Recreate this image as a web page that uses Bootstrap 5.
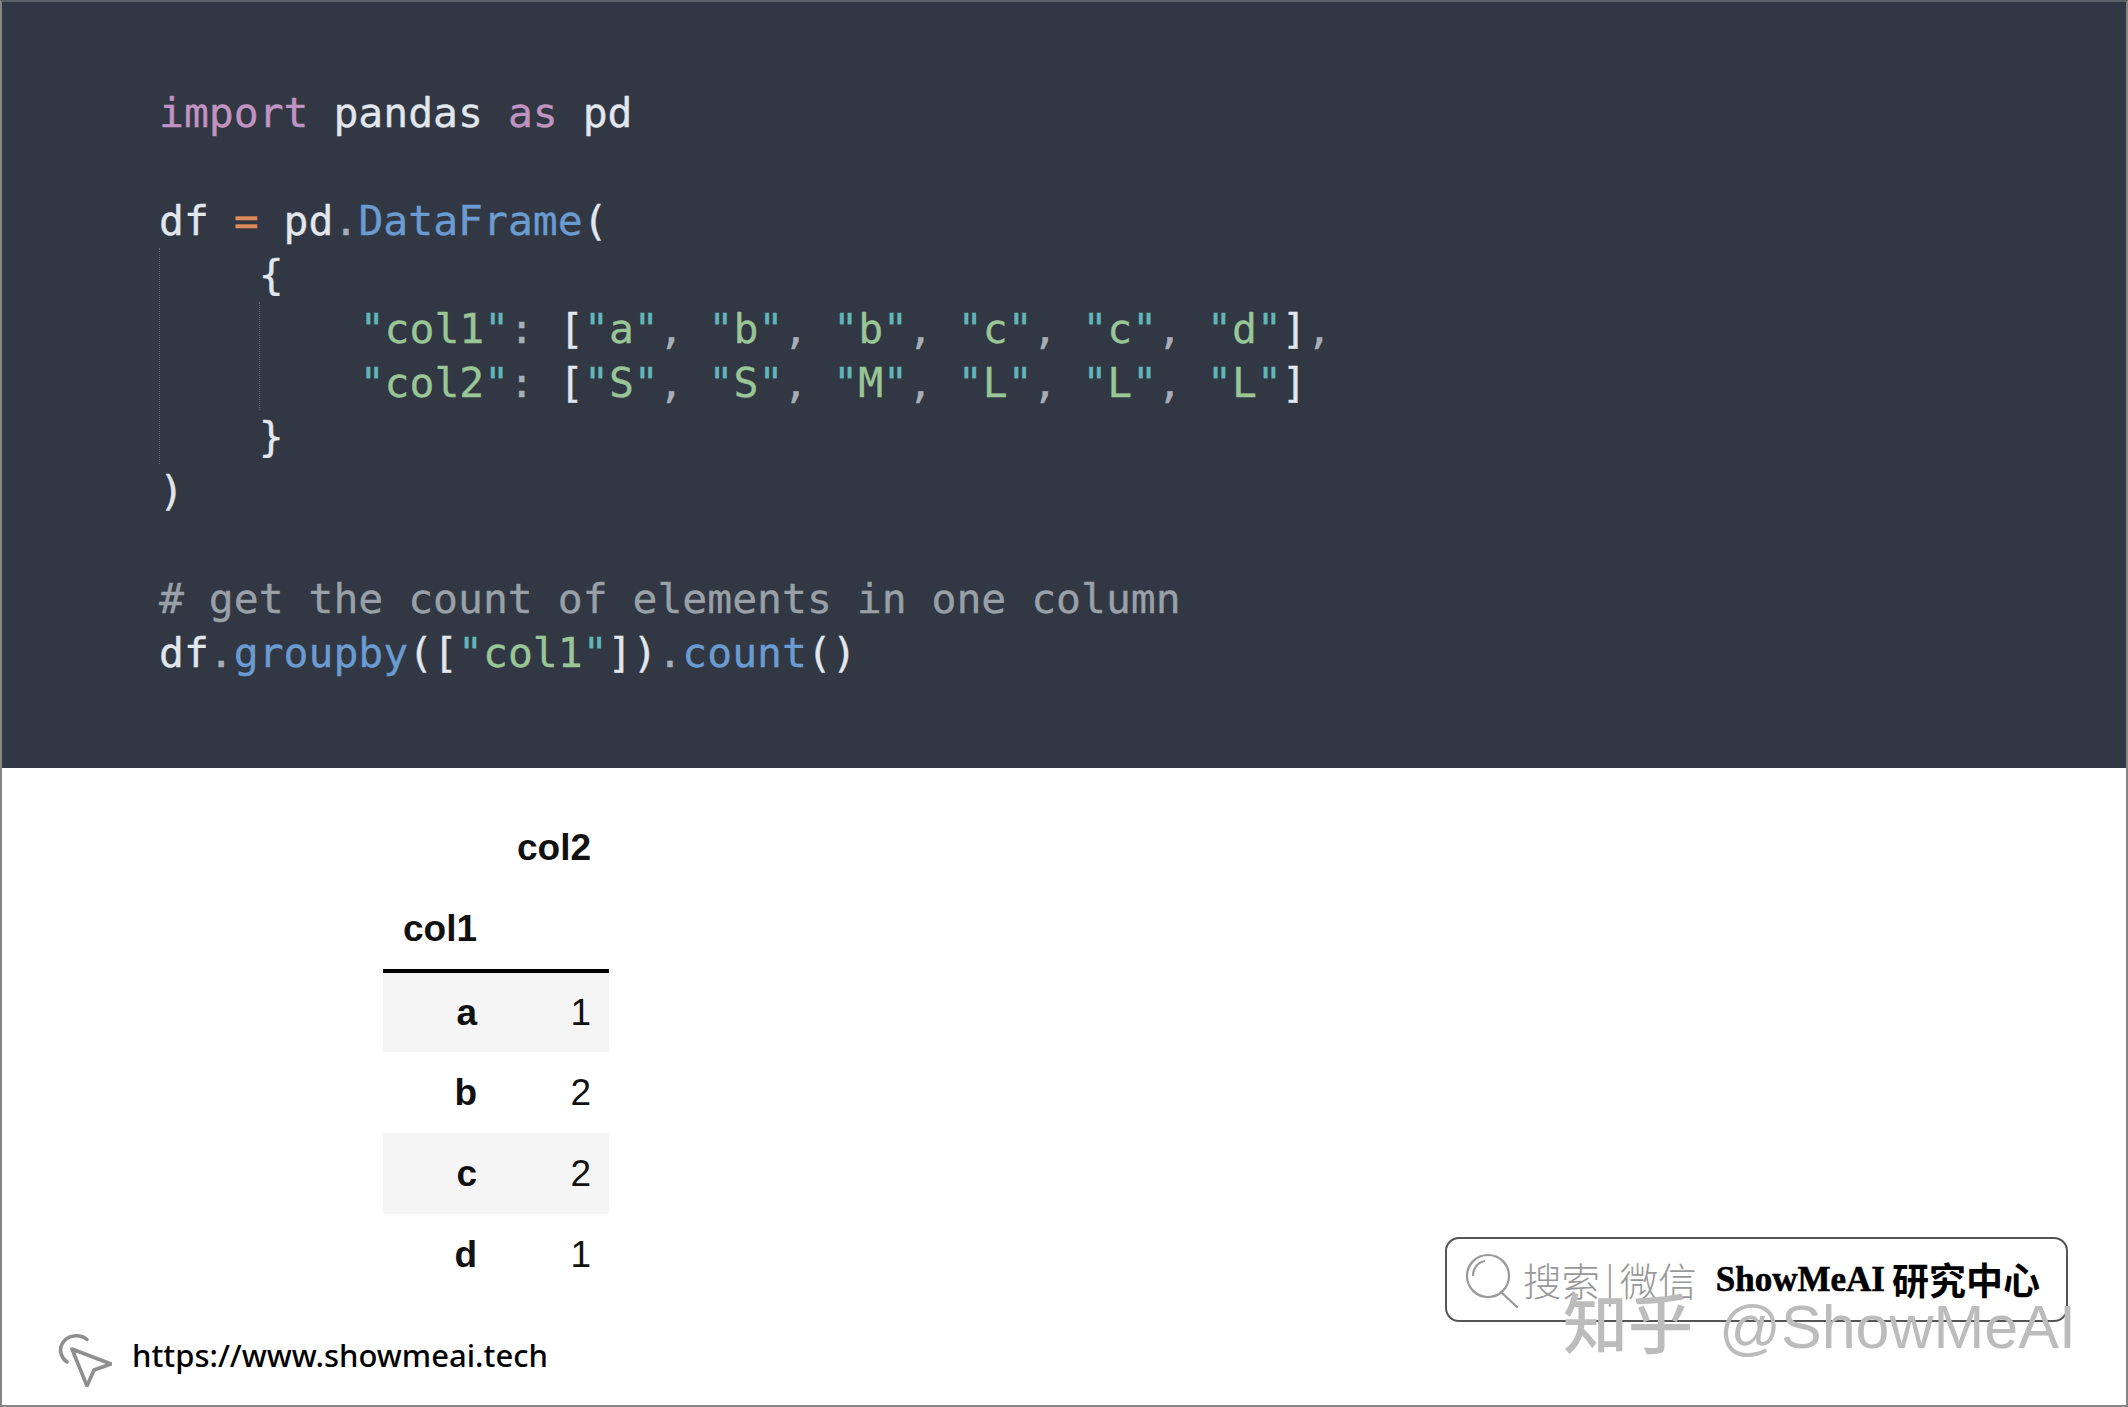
<!DOCTYPE html>
<html lang="zh">
<head>
<meta charset="utf-8">
<title>groupby count</title>
<link href="https://cdn.jsdelivr.net/npm/bootstrap@5.3.0/dist/css/bootstrap.min.css" rel="stylesheet">
<style>
html,body{margin:0;background:#fff}
.frame-box{width:2128px;height:1407px;border:2px solid #868686;border-top-color:#5b6068;position:relative;overflow:hidden}
.code-pane{height:766px;background:#313843;padding:84px 0 0 157px;font-family:"DejaVu Sans Mono",monospace;font-size:41.4px;line-height:54px;color:#e2e6ed;-webkit-text-stroke:.35px currentColor}
.code-line{white-space:pre;height:54px}
.guide-a{border-left:1px dotted #5f6670}
.guide-b{border-left:1px dotted #5f6670;margin-left:99px}
.guide-pad{margin-left:-1px}
.k{color:#c193c2}.f{color:#6a9bd1}.o{color:#e08a5c}.s{color:#9ac596}.q{color:#62b6b9}.p{color:#a9aeb6}.c{color:#9aa0a8}
.white-pane{height:637px;padding-top:40px}
.left-stack{width:640px}
.frame-table{margin-left:381px;width:226px;border-collapse:collapse;font-family:"Liberation Sans",Arial,sans-serif;font-size:37px;color:#111}
.frame-table th,.frame-table td{height:80px;padding:0 18px 0 0;text-align:right;font-weight:400;vertical-align:middle}
.frame-table th{font-weight:700}
.frame-table thead tr:last-child th{height:83px;border-bottom:4px solid #000}
.frame-table .head-left{text-align:left;padding:0 0 0 20px;width:112px}
.frame-table .zebra{background:#f5f5f5}
.frame-table tbody tr{height:81px}
.url-row{margin:28px 0 0 56px;gap:20px;font-family:"Noto Sans",sans-serif;font-size:31px;font-weight:500;color:#000;line-height:52px}
.url-icon{margin-top:10px}
.search-chip{width:623px;height:85px;border:2px solid #555;border-radius:14px;margin:0 58px 83px 0;padding-left:18px}
.chip-gray{font-family:"Noto Sans CJK SC",sans-serif;font-weight:300;font-size:38.500px;color:#999;margin-left:4px;line-height:1}
.chip-bar{color:#999;font-weight:300;margin:0 5px}
.chip-en{font-family:"Liberation Serif",serif;font-weight:700;font-size:35px;color:#000;margin-left:19px;line-height:1;-webkit-text-stroke:.6px #000}
.chip-cn{font-family:"Noto Sans CJK SC",sans-serif;font-weight:700;font-size:37px;color:#000;margin-left:7px;line-height:1}
.zh-mark{position:absolute;left:1561px;top:1282px;font-family:"Liberation Sans",sans-serif;font-size:61px;line-height:72px;color:#bcbcbc;white-space:nowrap}
.zh-mark span{font-family:"Noto Sans CJK SC",sans-serif;font-weight:500;font-size:65px;margin-right:26px}
</style>
</head>
<body>
<div class="frame-box">
  <section class="code-pane">
    <div class="code-line"><span class="k">import</span> pandas <span class="k">as</span> pd</div>
    <div class="code-line"> </div>
    <div class="code-line">df <span class="o">=</span> pd<span class="p">.</span><span class="f">DataFrame</span>(</div>
    <div class="guide-a">
      <div class="code-line guide-pad">    {</div>
      <div class="guide-b">
        <div class="code-line">    <span class="q">"</span><span class="s">col1</span><span class="q">"</span><span class="p">:</span> [<span class="q">"</span><span class="s">a</span><span class="q">"</span><span class="p">,</span> <span class="q">"</span><span class="s">b</span><span class="q">"</span><span class="p">,</span> <span class="q">"</span><span class="s">b</span><span class="q">"</span><span class="p">,</span> <span class="q">"</span><span class="s">c</span><span class="q">"</span><span class="p">,</span> <span class="q">"</span><span class="s">c</span><span class="q">"</span><span class="p">,</span> <span class="q">"</span><span class="s">d</span><span class="q">"</span>]<span class="p">,</span></div>
        <div class="code-line">    <span class="q">"</span><span class="s">col2</span><span class="q">"</span><span class="p">:</span> [<span class="q">"</span><span class="s">S</span><span class="q">"</span><span class="p">,</span> <span class="q">"</span><span class="s">S</span><span class="q">"</span><span class="p">,</span> <span class="q">"</span><span class="s">M</span><span class="q">"</span><span class="p">,</span> <span class="q">"</span><span class="s">L</span><span class="q">"</span><span class="p">,</span> <span class="q">"</span><span class="s">L</span><span class="q">"</span><span class="p">,</span> <span class="q">"</span><span class="s">L</span><span class="q">"</span>]</div>
      </div>
      <div class="code-line guide-pad">    }</div>
    </div>
    <div class="code-line">)</div>
    <div class="code-line"> </div>
    <div class="code-line c"># get the count of elements in one column</div>
    <div class="code-line">df<span class="p">.</span><span class="f">groupby</span>([<span class="q">"</span><span class="s">col1</span><span class="q">"</span>])<span class="p">.</span><span class="f">count</span>()</div>
  </section>
  <section class="white-pane d-flex justify-content-between align-items-start">
    <div class="left-stack">
      <table class="frame-table">
        <thead>
          <tr><th></th><th>col2</th></tr>
          <tr><th class="head-left">col1</th><th></th></tr>
        </thead>
        <tbody>
          <tr class="zebra"><th>a</th><td>1</td></tr>
          <tr><th>b</th><td>2</td></tr>
          <tr class="zebra"><th>c</th><td>2</td></tr>
          <tr><th>d</th><td>1</td></tr>
        </tbody>
      </table>
      <div class="url-row d-flex align-items-center">
        <svg class="url-icon" width="54" height="54" viewBox="0 0 54 54" fill="none" stroke="#8f8f8f" stroke-width="3.6" stroke-linecap="round" stroke-linejoin="round"><path d="M29 6.500C22 .5 9 1.500 4 11c-3 6-1 14 5 18"/><path d="M14 16l39 15-17 6-7 16z"/></svg>
        <span>https://www.showmeai.tech</span>
      </div>
    </div>
    <div class="search-chip d-flex align-items-center align-self-end">
      <svg width="54" height="56" viewBox="0 0 54 56" fill="none" stroke="#999" stroke-width="2.200"><ellipse cx="23" cy="24" rx="21" ry="21"/><path d="M8 24C8 16 13 10 20 9"/><path d="M37 41l15 14" stroke-linecap="round"/></svg>
      <span class="chip-gray">搜索<span class="chip-bar">|</span>微信</span>
      <span class="chip-en">ShowMeAI</span>
      <span class="chip-cn">研究中心</span>
    </div>
  </section>
  <div class="zh-mark"><span>知乎</span>@ShowMeAI</div>
</div>
<script src="https://cdn.jsdelivr.net/npm/bootstrap@5.3.0/dist/js/bootstrap.bundle.min.js"></script>
</body>
</html>
